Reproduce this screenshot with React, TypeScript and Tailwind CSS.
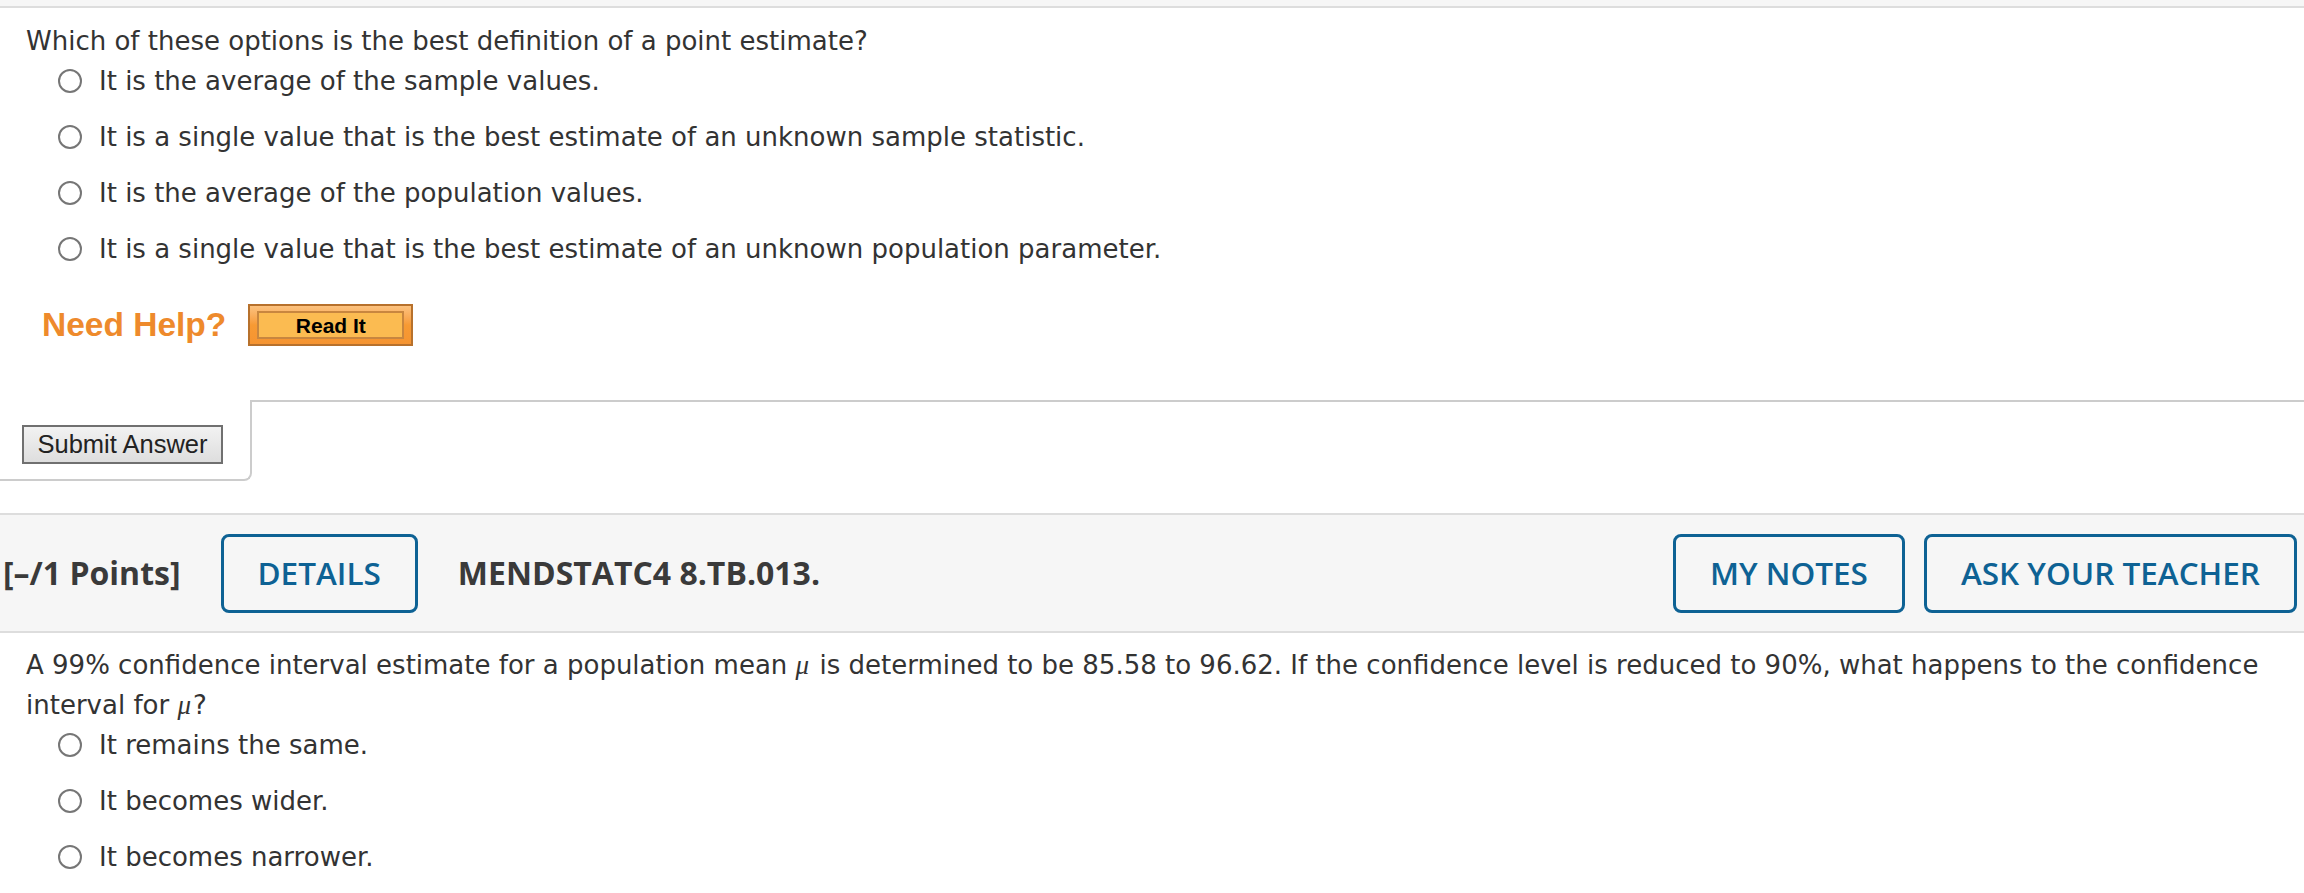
import React from 'react'

const q1Options = [
  'It is the average of the sample values.',
  'It is a single value that is the best estimate of an unknown sample statistic.',
  'It is the average of the population values.',
  'It is a single value that is the best estimate of an unknown population parameter.',
]

const q2Options = ['It remains the same.', 'It becomes wider.', 'It becomes narrower.']

function Mu() {
  return <span className="inline-block pr-[2px] font-['Liberation_Serif',serif] italic text-[27px] leading-none">μ</span>
}

function Radio() {
  return <span className="inline-block w-6 h-6 shrink-0 rounded-full border-2 border-[#767676] bg-white" />
}

function OptionList({ options }: { options: string[] }) {
  return (
    <ul className="flex flex-col gap-4 pl-[32px]">
      {options.map((opt) => (
        <li key={opt} className="flex items-center gap-[17px] h-[40px]">
          <Radio />
          <span>{opt}</span>
        </li>
      ))}
    </ul>
  )
}

function OutlineButton({ label }: { label: string }) {
  return (
    <button className="h-[79px] px-[34px] border-[3px] border-[#0e6294] rounded-[8px] text-[#0e6294] font-semibold text-[31.5px] bg-[#f6f6f6]">
      {label}
    </button>
  )
}

export default function App() {
  return (
    <div className="w-[2304px] min-h-[893px] bg-white text-[#333] font-['DejaVu_Sans',sans-serif] text-[26px] leading-[40px]">
      <div className="h-[8px] bg-[#f6f6f6] border-b-2 border-[#ddd]" />

      <section className="pl-[26px] pt-[13px]">
        <p>Which of these options is the best definition of a point estimate?</p>
        <OptionList options={q1Options} />

        <div className="flex items-center gap-[22px] ml-[16px] mt-[35px] font-['Liberation_Sans',sans-serif]">
          <span className="text-[33.5px] font-bold text-[#ee8a2c] leading-none">Need Help?</span>
          <button className="w-[165px] h-[42px] p-[5px_7px] border-2 border-[#b7712c] bg-gradient-to-b from-[#fcc27e] via-[#f79a33] to-[#f59431]">
            <span className="flex items-center justify-center w-full h-full border-2 border-[#c8863f] bg-[#fbbb51] text-[21px] font-bold text-black leading-none">
              Read It
            </span>
          </button>
        </div>
      </section>

      <div className="flex mt-[54px]">
        <div className="w-[252px] h-[81px] border-r-2 border-b-2 border-[#ccc] rounded-br-[8px] pl-[22px] pt-[24px]">
          <button className="w-[201px] h-[39px] border-2 border-[#707070] bg-gradient-to-b from-[#f2f2f2] to-[#dedede] font-['Liberation_Sans',sans-serif] text-[25.5px] leading-none text-[#222]">
            Submit Answer
          </button>
        </div>
        <div className="flex-1 border-t-2 border-[#ccc]" />
      </div>

      <div className="mt-[32px] h-[120px] flex items-center pl-[3px] pr-[7px] bg-[#f6f6f6] border-y-2 border-[#ddd] font-['Open_Sans',sans-serif] text-[32px] leading-none">
        <span className="font-bold text-[#3a3a3a]">[–/1 Points]</span>
        <div className="ml-[40px]">
          <OutlineButton label="DETAILS" />
        </div>
        <span className="ml-[40px] font-bold text-[#3a3a3a]">MENDSTATC4 8.TB.013.</span>
        <div className="ml-auto flex gap-[19px]">
          <OutlineButton label="MY NOTES" />
          <OutlineButton label="ASK YOUR TEACHER" />
        </div>
      </div>

      <section className="pl-[26px] pr-[20px] pt-[12px]">
        <p>
          A 99% confidence interval estimate for a population mean <Mu /> is determined to be 85.58 to 96.62. If the
          confidence level is reduced to 90%, what happens to the confidence interval for <Mu />?
        </p>
        <OptionList options={q2Options} />
      </section>
    </div>
  )
}
